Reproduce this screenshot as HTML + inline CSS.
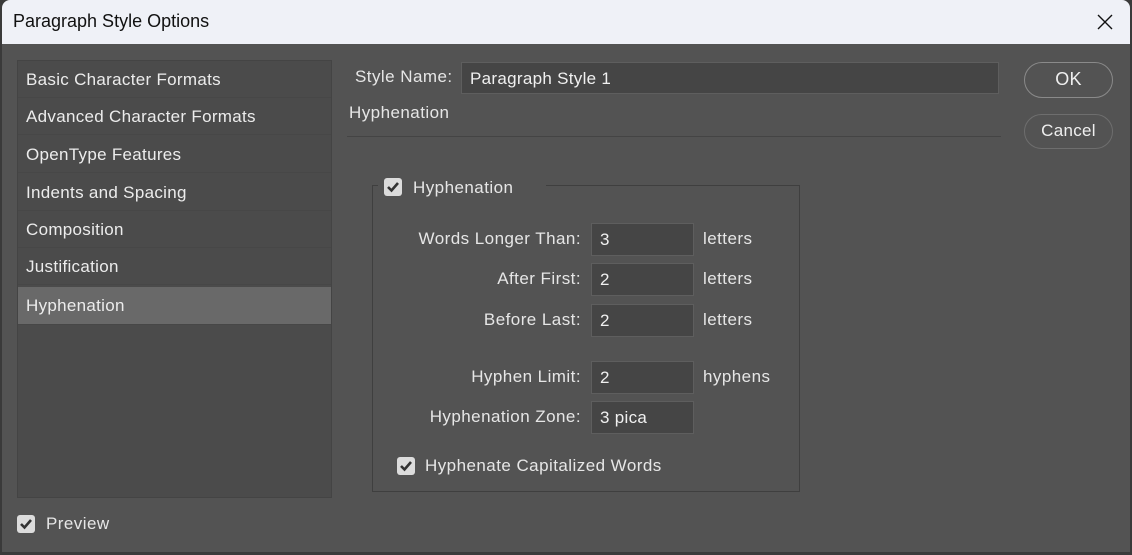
<!DOCTYPE html>
<html><head><meta charset="utf-8"><style>
*{margin:0;padding:0;box-sizing:border-box}
html,body{width:1132px;height:555px;overflow:hidden;background:#3a3a3a;font-family:"Liberation Sans",sans-serif}
.win{position:absolute;left:2px;top:0;width:1128px;height:552px;background:#535353;border-radius:8px 8px 0 0;overflow:hidden}
.title{position:absolute;left:0;top:0;width:1128px;height:44px;background:#eff1f7}
.title span{position:absolute;left:11px;top:11px;font-size:18px;color:#111}
.x{position:absolute;left:1093px;top:12px}
.t{position:absolute;font-size:17px;color:#e6e6e6;white-space:nowrap;line-height:20px;letter-spacing:0.45px}
.list{position:absolute;left:15px;top:60px;width:315px;height:438px;background:#4b4b4b;border:1px solid #444}
.item{position:absolute;left:0;width:313px;height:37px;border-bottom:1px solid #474747}
.item span{position:absolute;left:8px;top:9px;font-size:17px;color:#ececec;letter-spacing:0.3px}
.sel{background:#696969}
.inp{position:absolute;background:#454545;border:1px solid #5e5e5e}
.inp span{position:absolute;left:8px;top:6px;font-size:17px;color:#f0f0f0;letter-spacing:0.3px}
.btn{position:absolute;border:1.5px solid #8a8a8a;border-radius:18px;color:#efefef;font-size:17px;text-align:center;letter-spacing:0.3px}
.cb{position:absolute;width:18px;height:18px;background:#dcdcdc;border-radius:3px}
.cb svg{position:absolute;left:2px;top:3px}
.r{text-align:right}
</style></head><body>
<div class="win">
<div class="title"><span>Paragraph Style Options</span>
<svg class="x" width="20" height="20" viewBox="0 0 20 20"><path d="M3 3L17 17M17 3L3 17" stroke="#111" stroke-width="1.4"/></svg></div>

<div class="list">
<div class="item" style="top:0"><span>Basic Character Formats</span></div>
<div class="item" style="top:37px"><span>Advanced Character Formats</span></div>
<div class="item" style="top:75px"><span>OpenType Features</span></div>
<div class="item" style="top:113px"><span>Indents and Spacing</span></div>
<div class="item" style="top:150px"><span>Composition</span></div>
<div class="item" style="top:187px"><span>Justification</span></div>
<div class="item sel" style="top:226px;height:38px"><span>Hyphenation</span></div>
</div>

<div class="t" style="left:353px;top:67px">Style Name:</div>
<div class="inp" style="left:459px;top:62px;width:538px;height:32px"><span>Paragraph Style 1</span></div>
<div class="t" style="left:347px;top:103px">Hyphenation</div>
<div style="position:absolute;left:345px;top:136px;width:654px;height:1px;background:#444"></div>

<div class="btn" style="left:1022px;top:62px;width:89px;height:36px;line-height:33px;font-size:18px">OK</div>
<div class="btn" style="left:1022px;top:114px;width:89px;height:35px;line-height:32px;border-color:#6e6e6e">Cancel</div>

<div style="position:absolute;left:370px;top:185px;width:428px;height:307px;border:1px solid #3f3f3f"></div>
<div style="position:absolute;left:376px;top:178px;width:168px;height:20px;background:#535353"></div>
<div class="cb" style="left:382px;top:178px"><svg width="14" height="12" viewBox="0 0 14 12"><path d="M2 6l3.5 3.5L12 2" stroke="#333" stroke-width="2.6" fill="none"/></svg></div>
<div class="t" style="left:411px;top:178px">Hyphenation</div>

<div class="t r" style="left:370px;width:209px;top:229px">Words Longer Than:</div>
<div class="inp" style="left:589px;top:223px;width:103px;height:33px"><span>3</span></div>
<div class="t" style="left:701px;top:229px">letters</div>
<div class="t r" style="left:370px;width:209px;top:269px">After First:</div>
<div class="inp" style="left:589px;top:263px;width:103px;height:33px"><span>2</span></div>
<div class="t" style="left:701px;top:269px">letters</div>
<div class="t r" style="left:370px;width:209px;top:310px">Before Last:</div>
<div class="inp" style="left:589px;top:304px;width:103px;height:33px"><span>2</span></div>
<div class="t" style="left:701px;top:310px">letters</div>
<div class="t r" style="left:370px;width:209px;top:367px">Hyphen Limit:</div>
<div class="inp" style="left:589px;top:361px;width:103px;height:33px"><span>2</span></div>
<div class="t" style="left:701px;top:367px">hyphens</div>
<div class="t r" style="left:370px;width:209px;top:407px">Hyphenation Zone:</div>
<div class="inp" style="left:589px;top:401px;width:103px;height:33px"><span>3 pica</span></div>

<div class="cb" style="left:395px;top:457px"><svg width="14" height="12" viewBox="0 0 14 12"><path d="M2 6l3.5 3.5L12 2" stroke="#333" stroke-width="2.6" fill="none"/></svg></div>
<div class="t" style="left:423px;top:456px">Hyphenate Capitalized Words</div>

<div class="cb" style="left:15px;top:515px"><svg width="14" height="12" viewBox="0 0 14 12"><path d="M2 6l3.5 3.5L12 2" stroke="#333" stroke-width="2.6" fill="none"/></svg></div>
<div class="t" style="left:44px;top:514px">Preview</div>
</div>
</body></html>
